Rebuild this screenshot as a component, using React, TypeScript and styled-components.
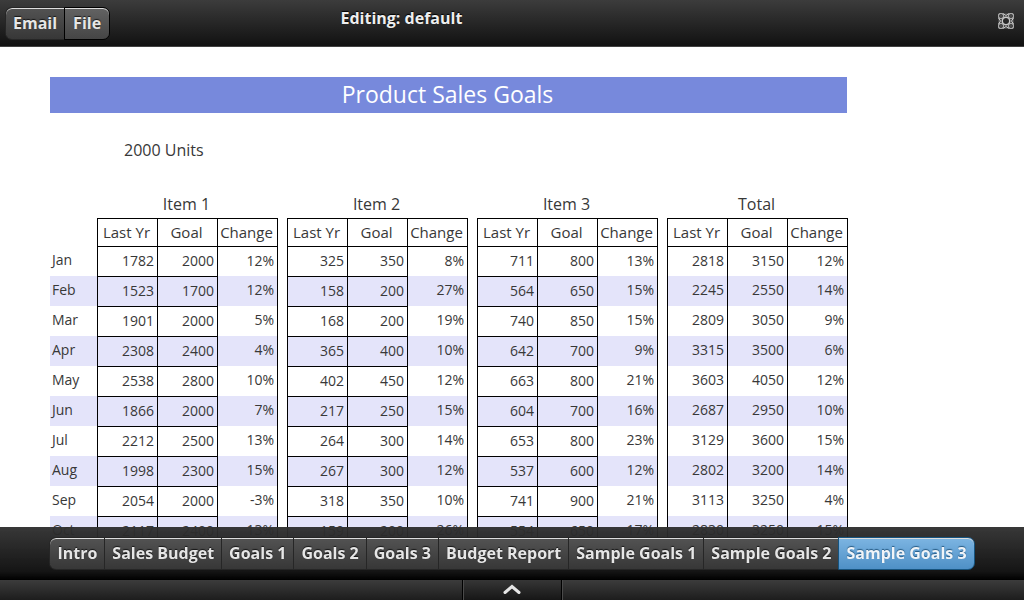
import React from "react";
import styled, { createGlobalStyle, css } from "styled-components";

const GlobalStyle = createGlobalStyle`
  *, *::before, *::after { box-sizing: border-box; }
  html, body { margin: 0; height: 100%; }
  body {
    overflow: hidden;
    background: #fff;
    color: #383838;
    font-family: "Open Sans", "Noto Sans", sans-serif;
  }
`;

const TopBar = styled.header`
  display: grid;
  grid-template-columns: 1fr 340px 1fr;
  align-items: start;
  height: 47px;
  padding: 7px 8px 0 5px;
  background: linear-gradient(#3c3c3c, #111);
  border-bottom: 1px solid #414141;
`;

const DocumentTitle = styled.h1`
  margin: 0;
  font-size: 16px;
  line-height: 22px;
  font-weight: 700;
  color: #eee;
  text-shadow: 0 -1px 1px #000;
`;

const ButtonGroup = styled.div`
  display: flex;
  width: max-content;
`;

const BarButton = styled.button<{ $active?: boolean; $raised?: boolean }>`
  height: 33px;
  margin: 0;
  padding: 0 ${(p) => (p.$raised ? "8px" : "7px")} 1px;
  font: 700 16px/28px "Open Sans", "Noto Sans", sans-serif;
  white-space: nowrap;
  color: #e6e6e6;
  text-shadow: 0 -1px 1px rgba(0, 0, 0, 0.7);
  background: linear-gradient(#535353, #373737);
  border: 1px solid #262626;
  border-right-width: 0;
  box-shadow: inset 0 1px 0 #ddd;

  &:first-child { border-radius: 7px 0 0 7px; }
  &:last-child { border-radius: 0 7px 7px 0; border-right-width: 1px; }

  ${(p) => p.$raised && css`
    background: linear-gradient(#636363, #454545);
    border-color: #000;
  `}
  ${(p) => p.$active && css`
    color: #f0f4f8;
    text-shadow: 0 -1px 1px rgba(20, 70, 110, 0.8);
    background: linear-gradient(#7db5e2, #4e90c6);
    border-color: #17547f;
  `}
`;

const IconButton = styled.button`
  justify-self: end;
  display: flex;
  margin: 4px 0 0;
  padding: 2px;
  border: 0;
  background: none;
`;

const Sheet = styled.main`
  padding: 30px 50px 0;
`;

const Banner = styled.h2`
  max-width: 797px;
  margin: 0;
  padding: 0 2px 2px 0;
  font-size: 23px;
  line-height: 34px;
  font-weight: 400;
  text-align: center;
  color: #fff;
  background: #7789dc;
`;

const Units = styled.p`
  margin: 23px 0 27px 74px;
  font-size: 16px;
  line-height: 28px;
`;

const GoalsTable = styled.table`
  width: 798px;
  table-layout: fixed;
  border-spacing: 0;
  border-collapse: separate;
`;

const GroupHead = styled.th`
  height: 27px;
  padding: 0 2px 1px 0;
  font-size: 16px;
  line-height: 24px;
  font-weight: 400;
`;

const ColumnHead = styled.th<{ $last?: boolean }>`
  height: 28px;
  padding: 0 2px 2px 0;
  font-size: 15px;
  line-height: 24px;
  font-weight: 400;
  white-space: nowrap;
  border: solid #000;
  border-width: 1px ${(p) => (p.$last ? "1px" : "0")} 0 1px;
`;

const MonthHead = styled.th<{ $shaded: boolean }>`
  height: 30px;
  padding: 0 0 2px 2px;
  font-size: 14px;
  line-height: 20px;
  font-weight: 400;
  text-align: left;
  background: ${(p) => (p.$shaded ? "#e4e4fa" : "#fff")};
`;

const Value = styled.td<{ $shaded: boolean; $ruled: boolean; $last: boolean }>`
  height: 30px;
  padding: 0 3px ${(p) => (p.$ruled ? "1px" : "2px")} 0;
  font-size: 14px;
  line-height: 20px;
  text-align: right;
  background: ${(p) => (p.$shaded ? "#e4e4fa" : "#fff")};
  border: solid #000;
  border-width: ${(p) => (p.$ruled ? "1px" : "0")} ${(p) => (p.$last ? "1px" : "0")} 0 1px;
`;

const Spacer = styled.td`
  padding: 0;
`;

const BottomDock = styled.footer`
  position: fixed;
  left: 0;
  right: 0;
  bottom: 0;
`;

const TabBar = styled.nav`
  display: flex;
  justify-content: center;
  height: 53px;
  padding-top: 10px;
  background: linear-gradient(rgba(48, 48, 48, 0.96), rgba(16, 16, 16, 0.98) 84%, #000);
`;

const Drawer = styled.div`
  display: flex;
  justify-content: center;
  height: 20px;
  background: linear-gradient(#3c3c3c, #1d1d1d);
`;

const DrawerHandle = styled.button`
  display: flex;
  align-items: center;
  justify-content: center;
  width: 100px;
  height: 20px;
  padding: 0;
  background: linear-gradient(#363636, #161616);
  border: solid #000;
  border-width: 0 1px;
  box-shadow: inset 1px 0 0 #4a4a4a, 1px 0 0 #4a4a4a;
`;

const tabs = [
  "Intro", "Sales Budget", "Goals 1", "Goals 2", "Goals 3",
  "Budget Report", "Sample Goals 1", "Sample Goals 2", "Sample Goals 3",
];
const groups = ["Item 1", "Item 2", "Item 3", "Total"];
const columns = ["Last Yr", "Goal", "Change"];

const months: [string, string[]][] = [
  ["Jan", "1782 2000 12% 325 350 8% 711 800 13% 2818 3150 12%".split(" ")],
  ["Feb", "1523 1700 12% 158 200 27% 564 650 15% 2245 2550 14%".split(" ")],
  ["Mar", "1901 2000 5% 168 200 19% 740 850 15% 2809 3050 9%".split(" ")],
  ["Apr", "2308 2400 4% 365 400 10% 642 700 9% 3315 3500 6%".split(" ")],
  ["May", "2538 2800 10% 402 450 12% 663 800 21% 3603 4050 12%".split(" ")],
  ["Jun", "1866 2000 7% 217 250 15% 604 700 16% 2687 2950 10%".split(" ")],
  ["Jul", "2212 2500 13% 264 300 14% 653 800 23% 3129 3600 15%".split(" ")],
  ["Aug", "1998 2300 15% 267 300 12% 537 600 12% 2802 3200 14%".split(" ")],
  ["Sep", "2054 2000 -3% 318 350 10% 741 900 21% 3113 3250 4%".split(" ")],
  ["Oct", "2117 2400 13% 159 200 26% 554 650 17% 2830 3250 15%".split(" ")],
];

function KnotIcon() {
  return (
    <svg width="16" height="16" viewBox="0 0 16 16" fill="none" aria-hidden="true">
      <path fill="#484848" fillRule="evenodd" d="M0 0h16v16H0zM7 5L5 7v2l2 2h2l2-2V7L9 5z" />
      <g stroke="#c8c8c8" strokeWidth="1">
        <rect x="0.5" y="0.5" width="5" height="5" rx="2" />
        <rect x="10.5" y="0.5" width="5" height="5" rx="2" />
        <rect x="0.5" y="10.5" width="5" height="5" rx="2" />
        <rect x="10.5" y="10.5" width="5" height="5" rx="2" />
        <path d="M5 .5l3 2 3-2M5 15.5l3-2 3 2M.5 5l2 3-2 3M15.5 5l-2 3 2 3" />
        <circle cx="8" cy="8" r="3.7" strokeWidth="1.4" />
      </g>
    </svg>
  );
}

export default function App() {
  return (
    <>
      <GlobalStyle />
      <TopBar>
        <ButtonGroup>
          <BarButton>Email</BarButton>
          <BarButton $raised>File</BarButton>
        </ButtonGroup>
        <DocumentTitle>Editing: default</DocumentTitle>
        <IconButton aria-label="Full screen"><KnotIcon /></IconButton>
      </TopBar>
      <Sheet>
        <Banner>Product Sales Goals</Banner>
        <Units>2000 Units</Units>
        <GoalsTable>
          <colgroup>
            <col style={{ width: 47 }} />
            {groups.map((g, i) => (
              <React.Fragment key={g}>
                {i > 0 && <col style={{ width: 9 }} />}
                <col style={{ width: 60 }} />
                <col style={{ width: 60 }} />
                <col style={{ width: 61 }} />
              </React.Fragment>
            ))}
          </colgroup>
          <thead>
            <tr>
              <Spacer />
              {groups.map((g, i) => (
                <React.Fragment key={g}>
                  {i > 0 && <Spacer />}
                  <GroupHead colSpan={3} scope="colgroup">{g}</GroupHead>
                </React.Fragment>
              ))}
            </tr>
            <tr>
              <Spacer />
              {groups.map((g, i) => (
                <React.Fragment key={g}>
                  {i > 0 && <Spacer />}
                  {columns.map((c, j) => (
                    <ColumnHead key={c} scope="col" $last={j === 2}>{c}</ColumnHead>
                  ))}
                </React.Fragment>
              ))}
            </tr>
          </thead>
          <tbody>
            {months.map(([month, values], row) => (
              <tr key={month}>
                <MonthHead scope="row" $shaded={row % 2 === 1}>{month}</MonthHead>
                {values.map((v, i) => (
                  <React.Fragment key={i}>
                    {i > 0 && i % 3 === 0 && <Spacer />}
                    <Value
                      $shaded={row % 2 === 1}
                      $ruled={row === 0 || (i < 9 && i % 3 !== 2)}
                      $last={i % 3 === 2}
                    >
                      {v}
                    </Value>
                  </React.Fragment>
                ))}
              </tr>
            ))}
          </tbody>
        </GoalsTable>
      </Sheet>
      <BottomDock>
        <TabBar>
          <ButtonGroup>
            {tabs.map((t, i) => (
              <BarButton key={t} $active={i === tabs.length - 1}>{t}</BarButton>
            ))}
          </ButtonGroup>
        </TabBar>
        <Drawer>
          <DrawerHandle aria-label="Open drawer">
            <svg width="20" height="12" viewBox="0 0 20 12" fill="none" aria-hidden="true">
              <path d="M3 8.5L10 2.5L17 8.5" stroke="#e6e6e6" strokeWidth="3" strokeLinecap="round" />
            </svg>
          </DrawerHandle>
        </Drawer>
      </BottomDock>
    </>
  );
}
